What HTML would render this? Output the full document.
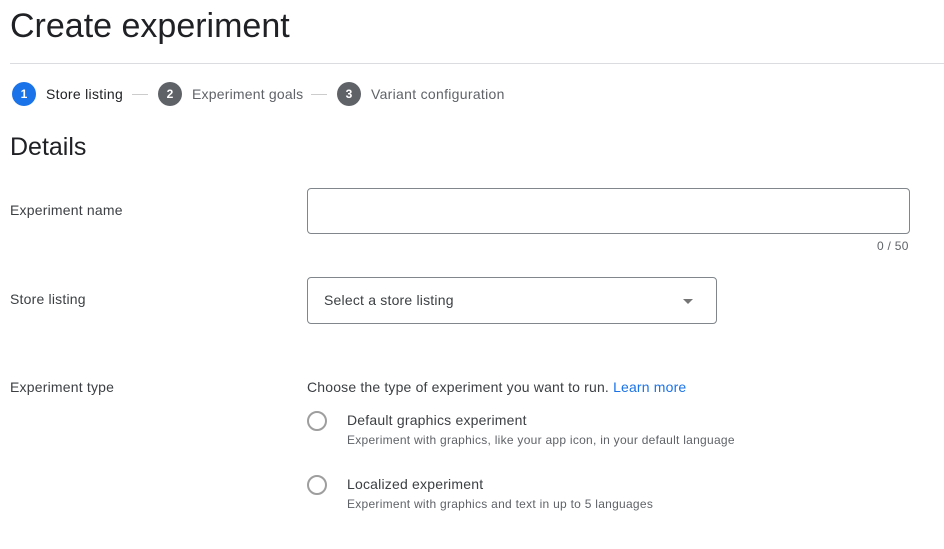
<!DOCTYPE html>
<html><head><meta charset="utf-8"><style>
body{margin:0;width:944px;height:549px;background:#fff;font-family:"Liberation Sans",Arial,sans-serif;color:#202124;position:relative;overflow:hidden;letter-spacing:0.2px}
.a{position:absolute;white-space:nowrap}
.c{position:absolute;width:24px;height:24px;border-radius:50%;color:#fff;font-size:12px;font-weight:bold;text-align:center;line-height:24px;letter-spacing:0}
.dash{position:absolute;height:1px;background:#ccc;width:16px;top:94px}
.lbl{font-size:14px;color:#3c4043}
.sm{font-size:12px;color:#5f6368;letter-spacing:0.27px}
.radio{position:absolute;width:16px;height:16px;border:2px solid #9e9e9e;border-radius:50%}
</style></head><body>
<div class="a" style="left:10px;top:7px;font-size:34px;color:#202124;letter-spacing:0">Create experiment</div>
<div style="position:absolute;left:10px;right:0;top:63px;height:1px;background:#dadce0"></div>
<div class="c" style="left:12px;top:82px;background:#1a73e8">1</div>
<div class="a" style="left:46px;top:86px;font-size:14px;color:#202124;letter-spacing:0.3px">Store listing</div>
<div class="dash" style="left:132px"></div>
<div class="c" style="left:158px;top:82px;background:#5f6368">2</div>
<div class="a" style="left:192px;top:86px;font-size:14px;color:#5f6368">Experiment goals</div>
<div class="dash" style="left:311px"></div>
<div class="c" style="left:337px;top:82px;background:#5f6368">3</div>
<div class="a" style="left:371px;top:86px;font-size:14px;color:#5f6368;letter-spacing:0.3px">Variant configuration</div>
<div class="a" style="left:10px;top:133px;font-size:25px;color:#202124;letter-spacing:0">Details</div>
<div class="a lbl" style="left:10px;top:202px">Experiment name</div>
<div style="position:absolute;left:307px;top:188px;width:601px;height:44px;border:1px solid #80868b;border-radius:4px"></div>
<div class="a sm" style="left:877px;top:239px">0 / 50</div>
<div class="a lbl" style="left:10px;top:291px">Store listing</div>
<div style="position:absolute;left:307px;top:277px;width:408px;height:45px;border:1px solid #80868b;border-radius:4px"></div>
<div class="a" style="left:324px;top:292px;font-size:14px;color:#3c4043">Select a store listing</div>
<div style="position:absolute;left:683px;top:299px;width:0;height:0;border-left:5px solid transparent;border-right:5px solid transparent;border-top:5px solid #757575"></div>
<div class="a lbl" style="left:10px;top:379px">Experiment type</div>
<div class="a" style="left:307px;top:379px;font-size:14px;color:#3c4043;letter-spacing:0.17px">Choose the type of experiment you want to run. <span style="color:#1a73e8">Learn more</span></div>
<div class="radio" style="left:307px;top:411px"></div>
<div class="a" style="left:347px;top:412px;font-size:14px;color:#3c4043">Default graphics experiment</div>
<div class="a sm" style="left:347px;top:433px">Experiment with graphics, like your app icon, in your default language</div>
<div class="radio" style="left:307px;top:475px"></div>
<div class="a" style="left:347px;top:476px;font-size:14px;color:#3c4043">Localized experiment</div>
<div class="a sm" style="left:347px;top:497px">Experiment with graphics and text in up to 5 languages</div>
</body></html>
